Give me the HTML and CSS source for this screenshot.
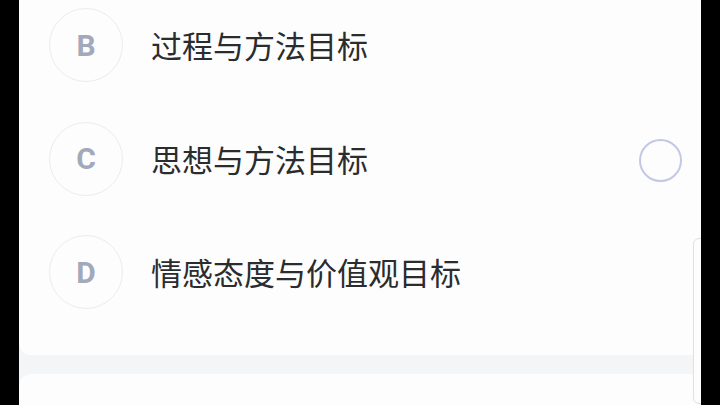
FILE: index.html
```html
<!DOCTYPE html>
<html lang="zh-CN">
<head>
<meta charset="utf-8">
<title>选项</title>
<link rel="stylesheet" href="styles.css">
</head>
<body>
<div class="screen">
  <div class="card options">
    <div class="option">
      <div class="letter">B</div>
      <div class="label">过程与方法目标</div>
    </div>
    <div class="option">
      <div class="letter">C</div>
      <div class="label">思想与方法目标</div>
      <div class="radio"></div>
    </div>
    <div class="option">
      <div class="letter">D</div>
      <div class="label">情感态度与价值观目标</div>
    </div>
  </div>
  <div class="card next"></div>
  <div class="side-handle"></div>
</div>
</body>
</html>
```

FILE: styles.css
```css
html, body {
  margin: 0;
  padding: 0;
  background: #000;
  width: 720px;
  height: 405px;
  overflow: hidden;
}

.screen {
  position: relative;
  margin: 0 19px;
  width: 682px;
  height: 405px;
  background: #f3f5f7;
  overflow: hidden;
  font-family: "Noto Sans CJK SC", "Noto Sans", sans-serif;
}

.card {
  background: #fdfdfd;
  border-radius: 12px;
}

.options {
  margin-top: -11.5px;
  padding-bottom: 26px;
  border-top-left-radius: 0;
  border-top-right-radius: 0;
}

.option {
  display: flex;
  align-items: center;
  padding: 19.75px 19px 19.75px 30px;
}

.letter {
  box-sizing: border-box;
  width: 74px;
  height: 74px;
  flex: none;
  border: 1px solid #eaecef;
  border-radius: 50%;
  display: flex;
  align-items: center;
  justify-content: center;
  font-family: Roboto, "Liberation Sans", sans-serif;
  font-weight: 700;
  font-size: 30px;
  color: #a2a9ba;
}

.label {
  margin-left: 28px;
  font-size: 31px;
  line-height: 40px;
  color: #2a2c2e;
}

.radio {
  box-sizing: border-box;
  margin-left: auto;
  width: 43px;
  height: 43px;
  flex: none;
  border: 2px solid #c3c8e6;
  border-radius: 50%;
  margin-top: 3px;
}

.next {
  margin-top: 19px;
  height: 60px;
}

.side-handle {
  position: absolute;
  left: 674px;
  top: 238px;
  width: 20px;
  height: 166px;
  box-sizing: border-box;
  border: 1px solid #dfe0e2;
  border-radius: 6px;
  background: #fdfdfd;
}
```
